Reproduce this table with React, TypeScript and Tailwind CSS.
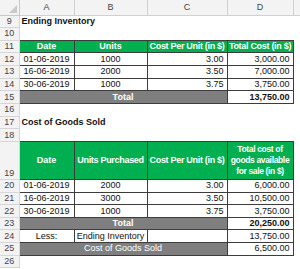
import React from "react";

const B = "border border-[#3c3c3c]";
const GREEN = `${B} bg-[#00b050] text-white font-bold text-center`;
const DARK = `${B} bg-[#7f7f7f] text-white text-center`;
const CELL_C = `${B} text-center`;
const CELL_R = `${B} text-right pr-[3px]`;

function Num({ n, bottom }: { n: number; bottom?: boolean }) {
  return (
    <td
      className={`bg-[#f3f3f3] text-[#444] text-center border-b border-r border-[#d6d6d6] ${
        bottom ? "align-bottom pb-[1px]" : ""
      }`}
    >
      {n}
    </td>
  );
}

function Blank({ n, label, bold }: { n: number; label?: string; bold?: boolean }) {
  return (
    <tr className="h-[12.65px]">
      <Num n={n} />
      <td colSpan={5} className={`pl-[2px] whitespace-nowrap ${bold ? "font-bold" : ""}`}>
        {label}
      </td>
    </tr>
  );
}

export default function App() {
  const inv = [
    ["01-06-2019", "1000", "3.00", "3,000.00"],
    ["16-06-2019", "2000", "3.50", "7,000.00"],
    ["30-06-2019", "1000", "3.75", "3,750.00"],
  ];
  const cogs = [
    ["01-06-2019", "2000", "3.00", "6,000.00"],
    ["16-06-2019", "3000", "3.50", "10,500.00"],
    ["30-06-2019", "1000", "3.75", "3,750.00"],
  ];

  return (
    <div className="w-[300px] h-[269px] overflow-hidden bg-white text-[9px] leading-none text-[#111] font-['Liberation_Sans',Arial,sans-serif]">
      <table className="table-fixed border-collapse w-[300px]">
        <colgroup>
          <col className="w-[19px]" />
          <col className="w-[55px]" />
          <col className="w-[73px]" />
          <col className="w-[80px]" />
          <col className="w-[66px]" />
          <col className="w-[7px]" />
        </colgroup>
        <tbody>
          <tr className="h-[15px] bg-[#f3f3f3] text-[#444]">
            <td className="relative border-r border-b border-[#c8c8c8]">
              <span className="absolute right-[2px] bottom-[2px] w-0 h-0 border-l-[8px] border-l-transparent border-b-[8px] border-b-[#c9c9c9]" />
            </td>
            <td className="text-center border-r border-b border-[#d0d0d0]">A</td>
            <td className="text-center border-r border-b border-[#d0d0d0]">B</td>
            <td className="text-center border-r border-b border-[#d0d0d0]">C</td>
            <td className="text-center border-r border-b border-[#d0d0d0]">D</td>
            <td className="border-b border-[#d0d0d0]" />
          </tr>

          <Blank n={9} label="Ending Inventory" bold />
          <Blank n={10} />

          <tr className="h-[12.65px]">
            <Num n={11} />
            <td className={GREEN}>Date</td>
            <td className={GREEN}>Units</td>
            <td className={`${GREEN} tracking-[-0.3px]`}>Cost Per Unit (in $)</td>
            <td className={`${GREEN} tracking-[-0.3px]`}>Total Cost (in $)</td>
            <td />
          </tr>
          {inv.map((r, i) => (
            <tr key={r[0]} className="h-[12.65px]">
              <Num n={12 + i} />
              <td className={CELL_C}>{r[0]}</td>
              <td className={CELL_C}>{r[1]}</td>
              <td className={CELL_R}>{r[2]}</td>
              <td className={CELL_R}>{r[3]}</td>
              <td />
            </tr>
          ))}
          <tr className="h-[12.65px]">
            <Num n={15} />
            <td colSpan={3} className={`${DARK} font-bold`}>Total</td>
            <td className={`${CELL_R} font-bold`}>13,750.00</td>
            <td />
          </tr>

          <Blank n={16} />
          <Blank n={17} label="Cost of Goods Sold" bold />
          <Blank n={18} />

          <tr className="h-[38px]">
            <Num n={19} bottom />
            <td className={GREEN}>Date</td>
            <td className={`${GREEN} tracking-[-0.3px]`}>Units Purchased</td>
            <td className={`${GREEN} tracking-[-0.3px]`}>Cost Per Unit (in $)</td>
            <td className={`${GREEN} text-[8.5px] tracking-[-0.35px] leading-[11px] whitespace-nowrap`}>
              Total cost of
              <br />
              goods available
              <br />
              for sale (in $)
            </td>
            <td />
          </tr>
          {cogs.map((r, i) => (
            <tr key={r[0]} className="h-[12.65px]">
              <Num n={20 + i} />
              <td className={CELL_C}>{r[0]}</td>
              <td className={CELL_C}>{r[1]}</td>
              <td className={CELL_R}>{r[2]}</td>
              <td className={CELL_R}>{r[3]}</td>
              <td />
            </tr>
          ))}
          <tr className="h-[12.65px]">
            <Num n={23} />
            <td colSpan={3} className={`${DARK} font-bold`}>Total</td>
            <td className={`${CELL_R} font-bold`}>20,250.00</td>
            <td />
          </tr>
          <tr className="h-[12.65px]">
            <Num n={24} />
            <td className={CELL_C}>Less:</td>
            <td className={CELL_C}>Ending Inventory</td>
            <td className={B} />
            <td className={CELL_R}>13,750.00</td>
            <td />
          </tr>
          <tr className="h-[12.65px]">
            <Num n={25} />
            <td colSpan={3} className={DARK}>Cost of Goods Sold</td>
            <td className={CELL_R}>6,500.00</td>
            <td />
          </tr>
          <Blank n={26} />
        </tbody>
      </table>
    </div>
  );
}
